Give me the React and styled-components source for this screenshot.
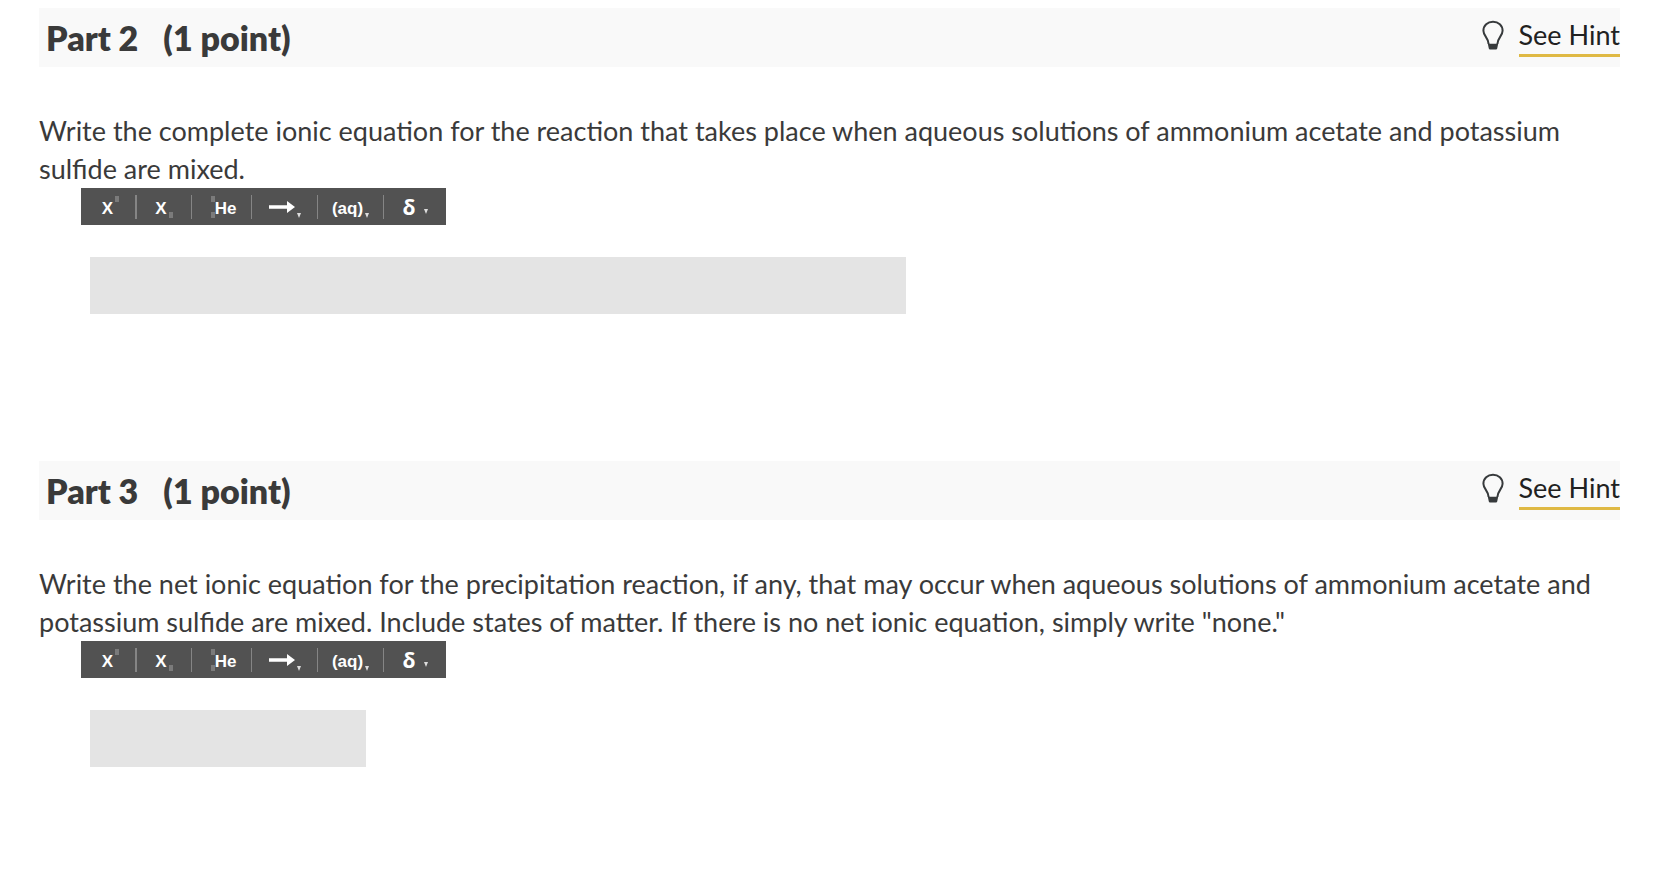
import React from "react";
import styled, { createGlobalStyle } from "styled-components";

const parts = [
  {
    number: 2,
    question:
      "Write the complete ionic equation for the reaction that takes place when aqueous solutions of ammonium acetate and potassium sulfide are mixed.",
    answerWidth: 816,
  },
  {
    number: 3,
    question:
      'Write the net ionic equation for the precipitation reaction, if any, that may occur when aqueous solutions of ammonium acetate and potassium sulfide are mixed. Include states of matter. If there is no net ionic equation, simply write "none."',
    answerWidth: 276,
  },
];

const Bulb = () => (
  <svg width="22" height="30" viewBox="0 0 22 30" aria-hidden="true">
    <path
      d="M6.6 24C6.6 18 1.4 16 1.4 10.8C1.4 5.4 5.6 1.8 11 1.8C16.4 1.8 20.6 5.4 20.6 10.8C20.6 16 15.4 18 15.4 24"
      fill="none"
      stroke="#373a3c"
      strokeWidth="2"
    />
    <path d="M5.8 23.8H16.2L15.2 28.4Q15 29.4 14 29.4H8Q7 29.4 6.8 28.4Z" fill="#373a3c" />
  </svg>
);

const Arrow = () => (
  <svg width="26" height="14" viewBox="0 0 26 14" aria-hidden="true">
    <path d="M0 5.2H18V1L26 7L18 13V8.8H0Z" fill="#fff" />
  </svg>
);

const Caret = () => (
  <svg width="4" height="5" viewBox="0 0 4 5" aria-hidden="true">
    <path d="M0 0H4L2 5Z" fill="#ddd" />
  </svg>
);

const Toolbar = () => (
  <Tools role="toolbar" aria-label="Chemistry formatting">
    <Tool type="button" $width={56} $rule={2} $indent={5} aria-label="Superscript">
      <Label>X</Label>
      <Marks $align="flex-start">
        <Mark />
      </Marks>
    </Tool>
    <Tool type="button" $width={55} $rule={1} aria-label="Subscript">
      <Label>X</Label>
      <Marks>
        <Mark />
      </Marks>
    </Tool>
    <Tool type="button" $width={60} $rule={1} $indent={4} $gap={0} aria-label="Isotope">
      <Marks $align="space-between">
        <Mark />
        <Mark />
      </Marks>
      <Label>He</Label>
    </Tool>
    <Tool type="button" $width={66} $rule={1} aria-label="Arrows">
      <Arrow />
      <Marks>
        <Caret />
      </Marks>
    </Tool>
    <Tool type="button" $width={66} $rule={1} aria-label="States">
      <Label>(aq)</Label>
      <Marks>
        <Caret />
      </Marks>
    </Tool>
    <Tool type="button" $width={62} $gap={8} aria-label="Greek letters">
      <Greek>δ</Greek>
      <Marks $height={15}>
        <Caret />
      </Marks>
    </Tool>
  </Tools>
);

const Part = ({ number, question, answerWidth }) => (
  <Section>
    <Header>
      <Title>
        <span>Part {number}</span>
        <span>(1 point)</span>
      </Title>
      <Hint>
        <Bulb />
        <HintLink href="#hint">See Hint</HintLink>
      </Hint>
    </Header>
    <Question htmlFor={`answer-${number}`}>{question}</Question>
    <Editor>
      <Toolbar />
      <Answer id={`answer-${number}`} type="text" $width={answerWidth} />
    </Editor>
  </Section>
);

const App = () => (
  <>
    <GlobalStyle />
    <Page>
      {parts.map((part) => (
        <Part key={part.number} {...part} />
      ))}
    </Page>
  </>
);

export default App;

const GlobalStyle = createGlobalStyle`
  * {
    box-sizing: border-box;
  }

  body {
    margin: 0;
    background: #fff;
    color: #3a3a3a;
    font-family: Lato, sans-serif;
    font-size: 27px;
    line-height: 38px;
  }
`;

const Page = styled.main`
  display: flex;
  flex-direction: column;
  gap: 147px;
  padding: 8px 59px 8px 39px;
`;

const Section = styled.section`
  display: flex;
  flex-direction: column;
`;

const Header = styled.header`
  display: flex;
  justify-content: space-between;
  align-items: flex-start;
  height: 59px;
  padding-left: 7px;
  background: #f9f9f9;
`;

const Title = styled.h2`
  display: flex;
  gap: 25px;
  margin: 0;
  font-size: 34px;
  font-weight: 800;
  line-height: 60px;
`;

const Hint = styled.div`
  display: flex;
  align-items: flex-start;
  gap: 15px;
  padding-top: 12px;
`;

const HintLink = styled.a`
  height: 37px;
  border-bottom: 3px solid #dfb944;
  color: #212121;
  line-height: 30px;
  text-decoration: none;
`;

const Question = styled.label`
  margin-top: 45px;
`;

const Editor = styled.div`
  display: flex;
  flex-direction: column;
  align-items: flex-start;
  padding-left: 42px;
`;

const Tools = styled.div`
  display: flex;
  align-items: center;
  height: 37px;
  background: #525252;
`;

const Tool = styled.button`
  display: flex;
  justify-content: center;
  align-items: center;
  gap: ${(props) => props.$gap ?? 2}px;
  width: ${(props) => props.$width}px;
  height: 24px;
  padding: 0 0 0 ${(props) => props.$indent || 0}px;
  border: 0;
  border-right: ${(props) => props.$rule || 0}px solid #858585;
  background: none;
  color: #fff;
  font: bold 17px/20px "Liberation Sans", Arial, sans-serif;
  cursor: pointer;

  svg {
    flex-shrink: 0;
  }
`;

const Label = styled.span`
  padding-top: 4px;
`;

const Marks = styled.span`
  display: flex;
  flex-direction: column;
  justify-content: ${(props) => props.$align || "flex-end"};
  height: ${(props) => props.$height || 22}px;
`;

const Mark = styled.span`
  width: 4px;
  height: 6px;
  background: #7b7b7b;
`;

const Greek = styled.span`
  font-family: "Open Sans", "Noto Sans", sans-serif;
  font-size: 21px;
`;

const Answer = styled.input`
  width: ${(props) => props.$width}px;
  max-width: 100%;
  height: 57px;
  margin: 32px 0 0 9px;
  padding: 0 12px;
  border: 0;
  background: #e4e4e4;
  color: inherit;
  font: inherit;
`;
